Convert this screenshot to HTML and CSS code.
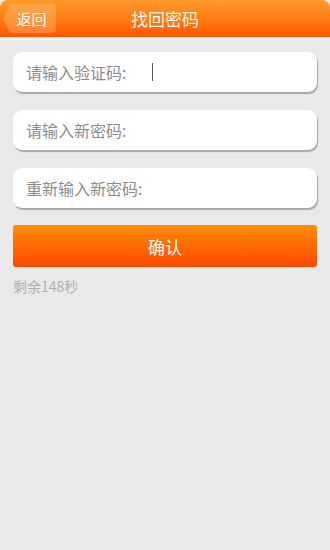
FILE: index.html
```html
<html lang="zh">
<head>
    <meta charset="UTF-8">
    <meta name="viewport" content="width=device-width, initial-scale=1.0">
    <title>找回密码</title>
    <link rel="stylesheet" href="styles.css">
</head>
<body>
    <div class="header">
        <div class="back">返回</div>
        <h1>找回密码</h1>
    </div>
    <div class="container">
        <div class="field">
            <span class="label">请输入验证码:</span>
            <span class="cursor"></span>
        </div>
        <div class="field">
            <span class="label">请输入新密码:</span>
        </div>
        <div class="field">
            <span class="label">重新输入新密码:</span>
        </div>
        <button class="confirm">确认</button>
        <div class="timer">剩余148秒</div>
    </div>
</body>
</html>
```

FILE: styles.css
```css
/* page */
body {
    font-family: "Noto Sans CJK SC", "Noto Sans", sans-serif;
    margin: 0;
    padding: 0;
    background: #e9e9e9;
    width: 330px;
    height: 550px;
}
.header {
    position: relative;
    height: 37px;
    background: linear-gradient(#ff9a2a, #ff7a10 55%, #ff5400);
    border-radius: 8px 8px 0 0;
    border-bottom: 3px solid #f4f4f4;
    display: flex;
    align-items: center;
    justify-content: center;
}
.header h1 {
    margin: 0;
    font-size: 17px;
    font-weight: normal;
    color: #fff8ee;
}
.back {
    position: absolute;
    left: 3px;
    top: 4px;
    width: 53px;
    height: 29px;
    padding-left: 4px;
    box-sizing: border-box;
    display: flex;
    align-items: center;
    justify-content: center;
    font-size: 15px;
    color: #fff;
    background: rgba(255, 200, 140, 0.35);
    border-radius: 4px;
    clip-path: polygon(7px 0, 100% 0, 100% 100%, 7px 100%, 0 50%);
}
.container {
    padding: 12px 13px;
}
.field {
    height: 40px;
    background: #fff;
    border-radius: 9px;
    box-shadow: 1px 2px 1px #a8a8a8;
    margin-bottom: 18px;
    display: flex;
    align-items: center;
    padding-left: 13px;
    font-size: 16px;
    color: #8c8c8c;
}
.cursor {
    width: 1px;
    height: 18px;
    background: #555;
    margin-left: 26px;
}
.confirm {
    display: block;
    width: 100%;
    height: 42px;
    margin-top: -1px;
    border: none;
    border-radius: 3px;
    background: linear-gradient(#ff8c08, #ff4800);
    color: #fff;
    font-family: inherit;
    font-size: 17px;
}
.timer {
    margin-top: 9px;
    font-size: 14px;
    color: #b0b0b0;
}
```
